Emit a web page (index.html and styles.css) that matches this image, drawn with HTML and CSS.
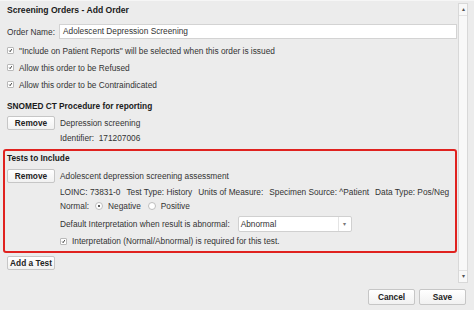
FILE: index.html
```html
<!DOCTYPE html>
<html lang="en">
<head>
  <meta charset="UTF-8">
  <title>Screening Orders - Add Order</title>
  <link rel="stylesheet" href="styles.css">
</head>
<body>
  <div class="dialog">
    <div class="dialog__scroll">
      <div class="dialog__content">
        <h1 class="dialog__title">Screening Orders - Add Order</h1>

        <div class="field">
          <label class="field__label">Order Name:</label>
          <div class="field__input">Adolescent Depression Screening</div>
        </div>

        <ul class="checks">
          <li><span class="check"><svg viewBox="0 0 8 8"><path d="M2 4.2 L3.4 5.8 L6 1.8"/></svg></span>"Include on Patient Reports" will be selected when this order is issued</li>
          <li><span class="check"><svg viewBox="0 0 8 8"><path d="M2 4.2 L3.4 5.8 L6 1.8"/></svg></span>Allow this order to be Refused</li>
          <li><span class="check"><svg viewBox="0 0 8 8"><path d="M2 4.2 L3.4 5.8 L6 1.8"/></svg></span>Allow this order to be Contraindicated</li>
        </ul>

        <h2 class="section__title">SNOMED CT Procedure for reporting</h2>
        <div class="item">
          <button class="btn">Remove</button>
          <span>Depression screening</span>
        </div>
        <div class="item__line">Identifier:&nbsp; 171207006</div>

        <div class="tests">
          <h2 class="section__title">Tests to Include</h2>
          <div class="item">
            <button class="btn">Remove</button>
            <span>Adolescent depression screening assessment</span>
          </div>
          <div class="item__line loinc">
            <span>LOINC: 73831-0</span>
            <span>Test Type: History</span>
            <span>Units of Measure:</span>
            <span>Specimen Source: ^Patient</span>
            <span>Data Type: Pos/Neg</span>
          </div>
          <div class="item__line normal">
            <span>Normal:</span>
            <span class="radio radio--on"></span><span>Negative</span>
            <span class="radio radio--second"></span><span>Positive</span>
          </div>
          <div class="item__line interp">
            <span>Default Interpretation when result is abnormal:</span>
            <div class="select">
              <span class="select__value">Abnormal</span>
              <span class="select__arrow">&#9662;</span>
            </div>
          </div>
          <div class="item__line required">
            <span class="check"><svg viewBox="0 0 8 8"><path d="M2 4.2 L3.4 5.8 L6 1.8"/></svg></span>
            <span>Interpretation (Normal/Abnormal) is required for this test.</span>
          </div>
        </div>

        <button class="btn btn--add">Add a Test</button>
      </div>
      <div class="scrollbar">
        <span class="scrollbar__btn">&#9652;</span>
        <span class="scrollbar__track"></span>
        <span class="scrollbar__btn scrollbar__btn--down">&#9662;</span>
      </div>
    </div>
    <div class="dialog__actions">
      <button class="btn btn--footer">Cancel</button>
      <button class="btn btn--footer">Save</button>
    </div>
  </div>
</body>
</html>
```

FILE: styles.css
```css
:root {
  --panel: #ececec;
  --text: #333;
  --heading: #1a1a1a;
  --line: #c9c9c9;
  --red: #e0221f;
}
html {
  font-family: 'Liberation Sans', Arial, sans-serif;
  font-size: 8.3px;
}
body {
  margin: 0;
  background: #fff;
  color: var(--text);
}
.dialog {
  width: 474px;
  height: 310px;
  background: var(--panel);
  border-top: 1px solid #f6f6f6;
  box-sizing: border-box;
  box-shadow: 0 1px 0 #9a9a9a, 0 2px 0 #b8b8b8;
  display: flex;
  flex-direction: column;
}
.dialog__scroll {
  display: flex;
  height: 284px;
}
.dialog__content {
  flex: 1;
  padding-left: 7px;
  padding-right: 1px;
}
.dialog__title {
  margin: 0;
  height: 19px;
  line-height: 19px;
  font-size: 8.6px;
  font-weight: bold;
  color: var(--heading);
}
.field {
  display: flex;
  align-items: center;
  margin-top: 4px;
  height: 15px;
}
.field__label {
  width: 52px;
}
.field__input {
  flex: 1;
  height: 15px;
  line-height: 13px;
  box-sizing: border-box;
  background: #fff;
  border: 1px solid #d3d3d3;
  padding-left: 3px;
}
.checks {
  list-style: none;
  margin: 3px 0 0;
  padding: 0;
}
.checks li {
  display: flex;
  align-items: center;
  height: 17px;
}
.check {
  display: inline-block;
  width: 7px;
  height: 7px;
  box-sizing: border-box;
  background: #fff;
  border: 1px solid #b9b9b9;
  border-radius: 1px;
  margin-right: 5px;
  flex-shrink: 0;
}
.check svg {
  display: block;
  width: 100%;
  height: 100%;
  fill: none;
  stroke: #222;
  stroke-width: 1.4;
}
.section__title {
  margin: 6px 0 0;
  height: 14px;
  line-height: 14px;
  font-size: 8.3px;
  font-weight: bold;
  color: var(--heading);
}
.item {
  display: flex;
  align-items: center;
  gap: 5px;
  margin-top: 3px;
  height: 14px;
}
.item__line {
  display: flex;
  align-items: center;
  margin-top: 1px;
  padding-left: 53px;
  height: 14px;
}
.btn {
  font-family: inherit;
  font-size: 8.3px;
  font-weight: bold;
  color: #222;
  height: 14px;
  width: 48px;
  padding: 0;
  box-sizing: border-box;
  background: linear-gradient(#ffffff, #f1f1f1);
  border: 1px solid #c6c6c6;
  border-radius: 2px;
}
.tests {
  margin: 4px 0 0 -4px;
  padding: 0 0 3px 2px;
  border: 2px solid var(--red);
  border-radius: 3px;
}
.tests .section__title {
  margin-top: 0;
}
.tests .item {
  margin-top: 4px;
}
.tests .loinc {
  margin-top: 2px;
  gap: 6px;
}
.tests .normal {
  margin-top: 0;
}
.normal .radio {
  margin-left: 6px;
  margin-right: 5px;
}
.normal .radio--second {
  margin-left: 7px;
}
.radio {
  display: inline-block;
  width: 8px;
  height: 8px;
  box-sizing: border-box;
  border-radius: 50%;
  background: #fff;
  border: 1px solid #bdbdbd;
  position: relative;
}
.radio--on::after {
  content: "";
  position: absolute;
  left: 2px;
  top: 2px;
  width: 2px;
  height: 2px;
  border-radius: 50%;
  background: #222;
}
.tests .interp {
  margin-top: 3px;
  height: 16px;
  gap: 8px;
}
.select {
  display: flex;
  align-items: center;
  width: 114px;
  height: 16px;
  box-sizing: border-box;
  background: #fff;
  border: 1px solid #d0d0d0;
  border-radius: 2px;
}
.select__value {
  flex: 1;
  padding-left: 2px;
}
.select__arrow {
  width: 12px;
  height: 100%;
  border-left: 1px solid #e4e4e4;
  text-align: center;
  line-height: 14px;
  font-size: 6px;
  color: #777;
}
.tests .required {
  margin-top: 2px;
}
.btn--add {
  margin-top: 3px;
}
.scrollbar {
  width: 10px;
  height: 280px;
  margin: 2px 6px 0 0;
  box-sizing: border-box;
  background: #f8f8f8;
  border: 1px solid #d8d8d8;
  display: flex;
  flex-direction: column;
}
.scrollbar__btn {
  height: 11px;
  line-height: 11px;
  text-align: center;
  font-size: 6px;
  color: #555;
  border-bottom: 1px solid #e2e2e2;
}
.scrollbar__btn--down {
  border-bottom: none;
  border-top: 1px solid #e2e2e2;
}
.scrollbar__track {
  flex: 1;
}
.dialog__actions {
  display: flex;
  justify-content: flex-end;
  gap: 4px;
  padding: 4px 8px 0 0;
}
.btn--footer {
  height: 16px;
  width: 47px;
}
```
